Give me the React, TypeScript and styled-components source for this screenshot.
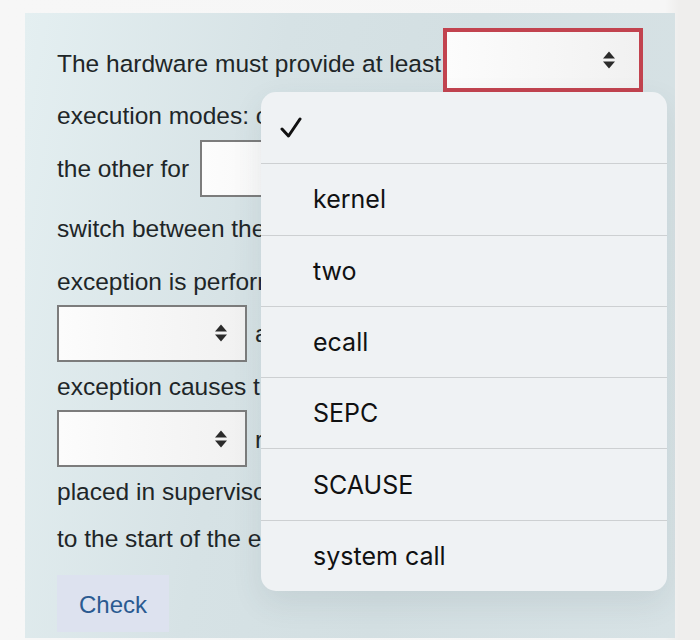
import React from 'react';
import styled, { createGlobalStyle } from 'styled-components';

const GlobalStyle = createGlobalStyle`
  html, body {
    margin: 0;
    padding: 0;
    background: #f5f5f4;
  }
  body {
    font-family: "Liberation Sans", Arial, sans-serif;
  }
`;

const Page = styled.div`
  width: 700px;
  height: 640px;
  padding: 13px 25px 0 25px;
  box-sizing: border-box;
  background: linear-gradient(90deg, #f7f7f7 0%, #f6f6f6 95%, #efeeed 97%);
  overflow: hidden;
`;

const Card = styled.div`
  position: relative;
  width: 650px;
  height: 625px;
  box-sizing: border-box;
  padding: 15px 0 0 32px;
  overflow: hidden;
  background: linear-gradient(100deg, #e4eff1 0%, #d6e2e5 35%, #d3dfe2 60%, #d7e2e5 100%);
`;

const Question = styled.div`
  display: flex;
  flex-direction: column;
`;

const Line = styled.div<{ $h: number }>`
  height: ${(p) => p.$h}px;
  display: flex;
  align-items: center;
  white-space: nowrap;
  font-size: 24.5px;
  color: #1e2628;
  line-height: 1;
`;

const Text = styled.span<{ $drop?: number; $gap?: number }>`
  padding-top: ${(p) => p.$drop ?? 3}px;
  margin-right: ${(p) => p.$gap ?? 0}px;
`;

const Select = styled.div<{ $w: number; $error?: boolean }>`
  flex: none;
  box-sizing: border-box;
  width: ${(p) => p.$w}px;
  height: ${(p) => (p.$error ? 64 : 57)}px;
  border: ${(p) => (p.$error ? '4px solid #c2434f' : '2px solid #7c7c7c')};
  background: linear-gradient(90deg, #fcfcfc 0%, #f1f1f1 100%);
  display: flex;
  align-items: center;
  justify-content: flex-end;
  padding-right: ${(p) => (p.$error ? 24 : 18)}px;
  margin-right: 8px;
`;

const Arrows = () => (
  <svg width="12" height="18" viewBox="0 0 12 18">
    <path d="M0 7.5 L6 0.5 L12 7.5 Z M0 10.5 L6 17.5 L12 10.5 Z" fill="#2b2b2b" />
  </svg>
);

const CheckButton = styled.button`
  margin-top: 12px;
  width: 112px;
  height: 57px;
  border: none;
  background: #dde2ef;
  color: #2a5a91;
  font-family: "Liberation Sans", Arial, sans-serif;
  font-size: 24px;
  text-align: left;
  padding: 2px 0 0 22px;
`;

const Popup = styled.ul`
  position: absolute;
  left: 236px;
  top: 79px;
  width: 406px;
  margin: 0;
  padding: 0;
  list-style: none;
  border-radius: 15px;
  background: #eff2f4;
  box-shadow: 0 12px 30px rgba(60, 80, 90, 0.1);
  overflow: hidden;
`;

const Option = styled.li`
  height: 71.3px;
  box-sizing: border-box;
  display: flex;
  align-items: center;
  padding-left: 52px;
  font-family: Inter, "Liberation Sans", sans-serif;
  font-size: 25px;
  color: #101112;
  & + & {
    border-top: 1px solid #cdd0d2;
  }
`;

const CheckMark = styled.svg`
  margin-left: -33px;
`;

const options = ['kernel', 'two', 'ecall', 'SEPC', 'SCAUSE', 'system call'];

export default function App() {
  return (
    <>
      <GlobalStyle />
      <Page>
        <Card>
          <Question>
            <Line $h={64}>
              <Text $drop={9}>The hardware must provide at least</Text>
              <Select $w={200} $error style={{ marginLeft: 2 }}>
                <Arrows />
              </Select>
            </Line>
            <Line $h={46}>
              <Text>execution modes: one</Text>
            </Line>
            <Line $h={60}>
              <Text $gap={11}>the other for</Text>
              <Select $w={200}>
                <Arrows />
              </Select>
            </Line>
            <Line $h={60}>
              <Text>switch between the two</Text>
            </Line>
            <Line $h={45}>
              <Text>exception is performed</Text>
            </Line>
            <Line $h={60}>
              <Select $w={190}>
                <Arrows />
              </Select>
              <Text>and</Text>
            </Line>
            <Line $h={45}>
              <Text>exception causes the</Text>
            </Line>
            <Line $h={61}>
              <Select $w={190}>
                <Arrows />
              </Select>
              <Text>register</Text>
            </Line>
            <Line $h={44}>
              <Text>placed in supervisor</Text>
            </Line>
            <Line $h={50}>
              <Text>to the start of the exception</Text>
            </Line>
          </Question>
          <CheckButton>Check</CheckButton>
          <Popup>
            <Option>
              <CheckMark width="22" height="22" viewBox="0 0 22 22">
                <path d="M2 12 L8.5 19 L20 2" fill="none" stroke="#111" strokeWidth="3" strokeLinecap="round" strokeLinejoin="round" />
              </CheckMark>
            </Option>
            {options.map((o) => (
              <Option key={o}>{o}</Option>
            ))}
          </Popup>
        </Card>
      </Page>
    </>
  );
}
